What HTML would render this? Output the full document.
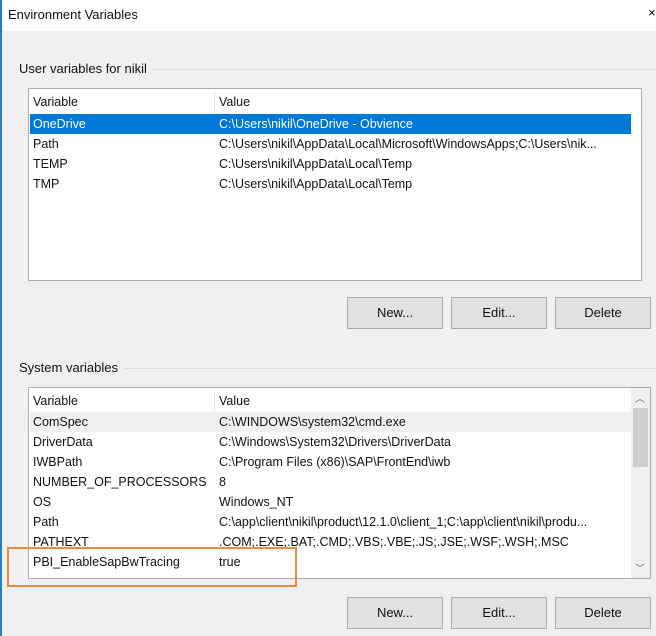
<!DOCTYPE html>
<html><head><style>
body{margin:0;width:656px;height:636px;background:#f0f0f0;font-family:"Liberation Sans",sans-serif;font-size:12.5px;color:#111;position:relative;overflow:hidden}
.a{position:absolute}
.title{left:0;top:0;width:656px;height:31px;background:#fff}
.lb{position:absolute;left:0;top:0;width:2px;height:636px;background:#2b79c9}
.list{background:#fff;border:1px solid #adadad}
.row{position:absolute;left:1px;height:20px;line-height:20px;white-space:nowrap}
.row span{position:absolute;left:3px}
.row span+span{left:189px}
.btn{position:absolute;width:94px;height:30px;background:#e1e1e1;border:1px solid #adadad;text-align:center;line-height:30px;font-size:13px}
.grp{border-top:1px solid #dcdcdc}
</style></head><body>
<div class="a title"></div>
<div class="lb"></div>
<div class="a" style="left:8px;top:7px;font-size:13px">Environment Variables</div>
<div class="a" style="left:648px;top:5px;font-size:13px">×</div>

<div class="a grp" style="left:150px;top:69px;width:506px"></div>
<div class="a" style="left:19px;top:61px;font-size:13px">User variables for nikil</div>
<div class="a list" style="left:28px;top:88px;width:612px;height:191px">
 <div class="row" style="top:3px;width:600px"><span>Variable</span><span>Value</span></div>
 <div class="a" style="left:185px;top:3px;width:1px;height:20px;background:#e5e5e5"></div>
 <div class="row" style="top:25px;width:601px;background:#0078d7;color:#fff"><span>OneDrive</span><span>C:\Users\nikil\OneDrive - Obvience</span></div>
 <div class="row" style="top:45px;width:601px;overflow:hidden"><span>Path</span><span>C:\Users\nikil\AppData\Local\Microsoft\WindowsApps;C:\Users\nik...</span></div>
 <div class="row" style="top:65px"><span>TEMP</span><span>C:\Users\nikil\AppData\Local\Temp</span></div>
 <div class="row" style="top:85px"><span>TMP</span><span>C:\Users\nikil\AppData\Local\Temp</span></div>
</div>
<div class="btn" style="left:347px;top:297px">New...</div>
<div class="btn" style="left:451px;top:297px">Edit...</div>
<div class="btn" style="left:555px;top:297px">Delete</div>

<div class="a grp" style="left:124px;top:368px;width:532px"></div>
<div class="a" style="left:19px;top:360px;font-size:13px">System variables</div>
<div class="a list" style="left:28px;top:387px;width:621px;height:190px">
 <div class="row" style="top:3px;width:600px"><span>Variable</span><span>Value</span></div>
 <div class="a" style="left:185px;top:3px;width:1px;height:20px;background:#e5e5e5"></div>
 <div class="row" style="top:24px;width:601px;background:#f0f0f0"><span>ComSpec</span><span>C:\WINDOWS\system32\cmd.exe</span></div>
 <div class="row" style="top:44px"><span>DriverData</span><span>C:\Windows\System32\Drivers\DriverData</span></div>
 <div class="row" style="top:64px"><span>IWBPath</span><span>C:\Program Files (x86)\SAP\FrontEnd\iwb</span></div>
 <div class="row" style="top:84px"><span>NUMBER_OF_PROCESSORS</span><span>8</span></div>
 <div class="row" style="top:104px"><span>OS</span><span>Windows_NT</span></div>
 <div class="row" style="top:124px;width:601px;overflow:hidden"><span>Path</span><span>C:\app\client\nikil\product\12.1.0\client_1;C:\app\client\nikil\produ...</span></div>
 <div class="row" style="top:144px"><span>PATHEXT</span><span>.COM;.EXE;.BAT;.CMD;.VBS;.VBE;.JS;.JSE;.WSF;.WSH;.MSC</span></div>
 <div class="row" style="top:164px"><span>PBI_EnableSapBwTracing</span><span>true</span></div>
 <div class="a" style="left:602px;top:0;width:19px;height:190px;background:#f0f0f0"></div>
 <div class="a" style="left:604px;top:20px;width:15px;height:59px;background:#cdcdcd"></div>
 <div class="a" style="left:606px;top:2px;font-size:10px;color:#606060">︿</div>
 <div class="a" style="left:606px;top:172px;font-size:10px;color:#606060">﹀</div>
</div>
<div class="a" style="left:7px;top:547px;width:286px;height:36px;border:2px solid #f08a3c"></div>
<div class="btn" style="left:347px;top:597px">New...</div>
<div class="btn" style="left:451px;top:597px">Edit...</div>
<div class="btn" style="left:555px;top:597px">Delete</div>
</body></html>
